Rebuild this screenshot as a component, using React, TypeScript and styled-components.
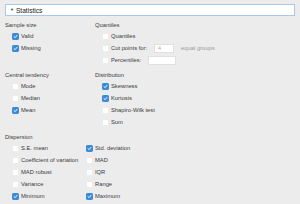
import React from "react";
import styled, { createGlobalStyle } from "styled-components";

const Global = createGlobalStyle`
  html, body { margin: 0; padding: 0; background: #ececec; }
  body { font-family: "Liberation Sans", Arial, sans-serif; color: #333; }
`;

const Page = styled.div`
  width: 300px;
  height: 204px;
  background: #ececec;
  padding: 4px 5px 0;
  box-sizing: border-box;
  overflow: hidden;
`;

const Header = styled.div`
  height: 12px;
  box-sizing: border-box;
  border: 1px solid #a9c9e8;
  background: #fff;
  display: flex;
  align-items: center;
  padding-left: 4px;
  gap: 2px;
  font-size: 6.6px;
  color: #222;
`;

const Arrow = styled.span`
  font-size: 4px;
  color: #333;
  line-height: 1;
`;

const Body = styled.div`
  display: flex;
  flex-direction: column;
  gap: 5px;
  margin-top: 5px;
`;

const Section = styled.div`
  display: grid;
  grid-template-columns: 90px 1fr;
  align-items: start;
`;

const Group = styled.div`
  display: flex;
  flex-direction: column;
`;

const Label = styled.div`
  height: 9px;
  line-height: 9px;
  font-size: 5.8px;
  color: #3a3a3a;
`;

const Rows = styled.div<{ $cols?: number }>`
  display: grid;
  grid-template-columns: ${(p) => (p.$cols === 2 ? "74px 1fr" : "1fr")};
  padding-left: 7px;
`;

const Row = styled.div`
  height: 12px;
  display: flex;
  align-items: center;
  font-size: 5.8px;
  color: #3a3a3a;
  white-space: nowrap;
`;

const Box = styled.span<{ $on?: boolean }>`
  width: 7px;
  height: 7px;
  box-sizing: border-box;
  border-radius: 1.2px;
  margin-right: 2px;
  flex: none;
  display: inline-flex;
  align-items: center;
  justify-content: center;
  background: ${(p) => (p.$on ? "#3a8ad6" : "#fff")};
  border: 0.5px solid ${(p) => (p.$on ? "#3a8ad6" : "#ececec")};
`;

const Field = styled.span<{ $w: number }>`
  width: ${(p) => p.$w}px;
  height: 9px;
  box-sizing: border-box;
  background: #fff;
  border: 0.5px solid #e0e0e0;
  display: inline-flex;
  align-items: center;
  padding-left: 3px;
  font-size: 5.4px;
  color: #aaa;
  flex: none;
`;

const Muted = styled.span`
  color: #9a9a9a;
`;

const Check = () => (
  <svg width="5" height="5" viewBox="0 0 10 10">
    <path d="M2 5.3 L4.2 7.4 L8.2 2.6" fill="none" stroke="#fff" strokeWidth="1.8" strokeLinecap="round" strokeLinejoin="round" />
  </svg>
);

const CB: React.FC<{ on?: boolean; children?: React.ReactNode }> = ({ on, children }) => (
  <Row>
    <Box $on={on}>{on && <Check />}</Box>
    {children}
  </Row>
);

export default function App() {
  return (
    <>
      <Global />
      <Page>
        <Header>
          <Arrow>▼</Arrow>
          <span>Statistics</span>
        </Header>
        <Body>
          <Section>
            <Group>
              <Label>Sample size</Label>
              <Rows>
                <CB on>Valid</CB>
                <CB on>Missing</CB>
              </Rows>
            </Group>
            <Group>
              <Label>Quantiles</Label>
              <Rows>
                <CB>Quantiles</CB>
                <CB>
                  <span style={{ marginRight: 7 }}>Cut points for:</span>
                  <Field $w={20}>4</Field>
                  <Muted style={{ marginLeft: 7 }}>equal groups</Muted>
                </CB>
                <CB>
                  <span style={{ marginRight: 7 }}>Percentiles:</span>
                  <Field $w={28} />
                </CB>
              </Rows>
            </Group>
          </Section>
          <Section>
            <Group>
              <Label>Central tendency</Label>
              <Rows>
                <CB>Mode</CB>
                <CB>Median</CB>
                <CB on>Mean</CB>
              </Rows>
            </Group>
            <Group>
              <Label>Distribution</Label>
              <Rows>
                <CB on>Skewness</CB>
                <CB on>Kurtosis</CB>
                <CB>Shapiro-Wilk test</CB>
                <CB>Sum</CB>
              </Rows>
            </Group>
          </Section>
          <Group>
            <Label>Dispersion</Label>
            <Rows $cols={2}>
              <CB>S.E. mean</CB>
              <CB on>Std. deviation</CB>
              <CB>Coefficient of variation</CB>
              <CB>MAD</CB>
              <CB>MAD robust</CB>
              <CB>IQR</CB>
              <CB>Variance</CB>
              <CB>Range</CB>
              <CB on>Minimum</CB>
              <CB on>Maximum</CB>
            </Rows>
          </Group>
        </Body>
      </Page>
    </>
  );
}
